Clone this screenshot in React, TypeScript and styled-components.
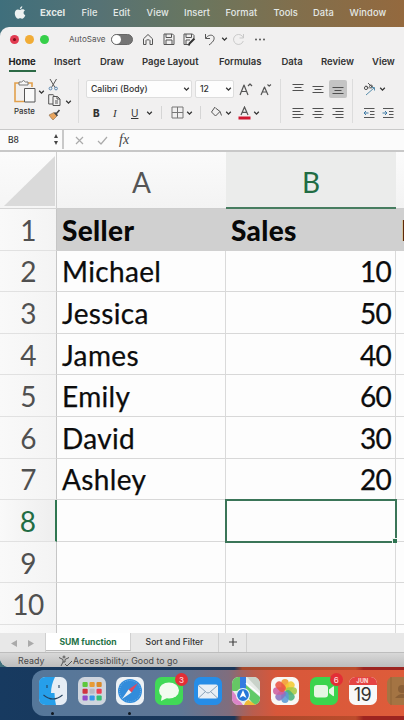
import React from "react";
import styled, { createGlobalStyle, css } from "styled-components";

const Global = createGlobalStyle`
  *{box-sizing:border-box}
  body{margin:0;width:404px;height:720px;overflow:hidden;font-family:Inter,"Liberation Sans",sans-serif;color:#333}
  svg{display:block}
`;

const Desktop = styled.div`
  width:404px;height:720px;overflow:hidden;display:flex;flex-direction:column;
  background:linear-gradient(90deg,#173a60 0,#1a3658 58%,#a5482b 60%,#bc4c2c 88%,#9c2420 90%) 0 667px/404px 53px no-repeat,
    linear-gradient(90deg,#3f6f7c 0,#567274 25%,#69765f 48%,#806f4d 72%,#94693e 100%);
`;
const MenuBar = styled.nav`
  height:27px;flex:none;display:grid;align-items:center;padding:0 0 2px 14px;
  grid-template-columns:26px 41.5px 31.5px 33.5px 37.5px 41.5px 48px 39.5px 36.5px 60px;
  font-size:9.3px;font-weight:500;color:#e4e9e7;overflow:hidden;white-space:nowrap;
`;
const MenuItem = styled.span<{ $bold?: boolean }>`
  font-weight:${p => (p.$bold ? 700 : 500)};letter-spacing:${p => (p.$bold ? "0" : ".1px")};
  font-size:${p => (p.$bold ? "9.6px" : "9.3px")};
`;
const Window = styled.main`
  height:640px;flex:none;display:flex;flex-direction:column;background:#f1f0f0;
  border-radius:9px 0 0 9px;overflow:hidden;
`;
const TitleBar = styled.header`height:24px;flex:none;display:flex;align-items:center;padding-left:10px;`;
const Light = styled.i<{ $c: string }>`
  width:9px;height:9px;border-radius:50%;background:${p => p.$c};margin-right:6px;display:flex;align-items:center;justify-content:center;
`;
const LightDot = styled.i`width:3px;height:3px;border-radius:50%;background:#7d0e18;`;
const AutoSave = styled.span`font-size:8.1px;margin:0 4px 0 14px;width:38px;white-space:nowrap;color:#555;`;
const Toggle = styled.span`width:22px;height:11px;border-radius:6px;background:#747474;border:1px solid #666;margin-right:9px;display:flex;`;
const Knob = styled.i`width:9px;height:9px;border-radius:50%;background:#fff;`;
const QuickIcons = styled.div`display:grid;align-items:center;grid-template-columns:20.5px 20.5px 21px 16.5px 12px 21px 14px;`;

const Tabs = styled.nav`
  height:24px;flex:none;display:grid;padding:3px 0 0 8.5px;white-space:nowrap;
  grid-template-columns:45.5px 46px 42px 77px 62.5px 39.5px 51px 36px;
  font-size:9.5px;font-weight:600;color:#333;
`;
const Tab = styled.span<{ $on?: boolean }>`
  justify-self:start;height:18px;line-height:16px;
  ${p => p.$on && css`font-weight:700;color:#222;border-bottom:2px solid #2d6a46;`}
`;
const Ribbon = styled.section`
  height:55px;flex:none;display:grid;grid-template-columns:79px 202px 72px 51px;border-bottom:1px solid #c9c9c9;padding-top:4px;
`;
const Group = styled.div`height:44px;border-right:1px solid #dcdcdc;`;
const Clipboard = styled(Group)`display:grid;grid-template-columns:24px 11px 13px 12px;padding-left:12px;`;
const PasteBox = styled.div`display:flex;flex-direction:column;align-items:center;gap:3px;font-size:7.8px;font-weight:500;color:#333;white-space:nowrap;padding:1px 0 0 1px;`;
const Drop = styled.div`padding-top:10px;display:flex;justify-content:center;`;
const Tools = styled.div`display:flex;flex-direction:column;gap:3px;padding-left:1px;`;
const ToolDrop = styled.div`padding:20px 0 0 5px;`;
const FontGroup = styled(Group)`padding:1px 0 0 7px;display:flex;flex-direction:column;`;
const Line = styled.div`display:flex;align-items:center;`;
const Select = styled.div<{ $w: number }>`
  width:${p => p.$w}px;height:18px;background:#fdfdfd;border:1px solid #ddd;border-radius:2px;margin-right:3px;
  display:flex;align-items:center;justify-content:space-between;padding:0 1px 0 4px;font-size:8.7px;font-weight:500;white-space:nowrap;
`;
const Format = styled.div`height:19px;margin-top:5px;display:grid;align-items:center;grid-template-columns:20px 18px 15px 15px 10px 15px 14px 10px 15px 13px 15px 11px;padding-left:7px;`;
const Letter = styled.span<{ $k: string }>`
  font-size:${p => (p.$k === "I" ? "11px" : "10px")};font-weight:${p => (p.$k === "B" ? 800 : 400)};
  font-family:${p => (p.$k === "I" ? '"Liberation Serif",serif' : 'Inter,sans-serif')};
  font-style:${p => (p.$k === "I" ? "italic" : "normal")};
  text-decoration:${p => (p.$k === "U" ? "underline" : "none")};
`;
const Sep = styled.i`width:1px;height:13px;background:#d5d5d5;`;
const AlignGroup = styled(Group)`display:grid;grid-template:20px 20px / 20px 20px 20px;row-gap:4px;padding:0 0 0 7px;align-items:center;justify-items:center;`;
const AlignCell = styled.span<{ $on?: boolean }>`
  width:18px;height:18px;border-radius:2px;display:flex;align-items:center;justify-content:center;
  background:${p => (p.$on ? "#c4c4c4" : "transparent")};
`;
const LastGroup = styled.div`display:grid;height:44px;grid-template:20px 20px / 20px 18px;row-gap:4px;padding-left:6px;align-items:center;justify-items:center;`;
const EndDrop = styled.div`justify-self:start;`;

const FormulaBar = styled.section`height:20px;flex:none;display:flex;background:#fbfbfb;`;
const NameBox = styled.div`width:64px;height:19px;border-right:2px solid #c9c9c9;display:flex;justify-content:space-between;align-items:center;padding:0 3px 0 8px;font-size:8.5px;font-weight:500;`;
const FormulaTools = styled.div`display:grid;grid-template-columns:22px 22px 20px;align-items:center;padding-left:11px;`;
const Fx = styled.span`font:italic 14px "Liberation Serif",serif;color:#444;line-height:16px;`;

const Sheet = styled.section`
  height:483px;flex:none;border-top:2px solid #c8c8c8;background:#fdfdfd;overflow:hidden;display:grid;
  grid-template-columns:57px 169px 170px 10px;grid-template-rows:57px 41.6px;grid-auto-rows:41.6px;
  font-family:Lato,sans-serif;font-size:28px;color:#0c0c0c;
`;
const Corner = styled.div`border-right:1px solid #cfcfcf;border-bottom:1px solid #d5d5d5;background:linear-gradient(#fbfbfb,#f5f5f5);padding:4px 1px 0 4px;`;
const ColHead = styled.div<{ $on?: boolean }>`
  display:flex;align-items:center;justify-content:center;padding-top:4px;color:${p => (p.$on ? "#216c43" : "#555")};
  background:${p => (p.$on ? "#ebeceb" : "linear-gradient(#fbfbfb,#f3f3f3)")};
  border-bottom:${p => (p.$on ? "2px solid #477d60" : "1px solid #cecece")};
`;
const RowHead = styled.div<{ $on?: boolean }>`
  display:flex;align-items:center;justify-content:center;border-bottom:1px solid #e1e1e1;letter-spacing:-.5px;
  padding-top:1px;
  border-right:${p => (p.$on ? "2px solid #2e7650" : "1px solid #c6c6c6")};
  color:${p => (p.$on ? "#216c43" : "#505050")};background:linear-gradient(90deg,#f9f9f9,${p => (p.$on ? "#eeeeee" : "#f4f4f4")});
`;
const Cell = styled.div<{ $head?: boolean; $num?: boolean; $on?: boolean }>`
  display:flex;align-items:center;justify-content:${p => (p.$num ? "flex-end" : "flex-start")};
  padding:${p => (p.$num ? "1px 4px 0 0" : "1px 0 0 5px")};overflow:hidden;
  letter-spacing:${p => (p.$num ? "-.7px" : ".35px")};-webkit-text-stroke:.25px currentColor;
  border-right:1px solid #dadada;border-bottom:1px solid #d8d8d8;
  ${p => p.$head && css`background:#d0d0d0;border-color:#d0d0d0;font-weight:900;color:#080808;-webkit-text-stroke:0;`}
  ${p => p.$on && css`overflow:visible;position:relative;outline:2px solid #3b7558;outline-offset:-1px;z-index:1;`}
`;
const FillHandle = styled.i`position:absolute;right:-2px;bottom:-2px;width:5px;height:5px;background:#2c7350;border:1px solid #eef5f0;border-width:1px 0 0 1px;`;
const SheetTabs = styled.footer`height:19px;flex:none;background:#e8e8e8;display:grid;grid-template-columns:46px 85px 88px 28px;font-size:8.6px;font-weight:500;white-space:nowrap;`;
const Arrows = styled.div`display:flex;align-items:center;gap:11px;padding:1px 0 0 11px;border-right:1px solid #d0d0d0;`;
const SheetTab = styled.div<{ $on?: boolean }>`
  display:flex;justify-content:center;align-items:center;border-right:1px solid #d0d0d0;padding-bottom:1px;
  ${p => p.$on && css`background:#fff;color:#257348;font-weight:700;border-bottom:1px solid #b9b9b9;height:18px;padding:0;`}
`;
const Status = styled.footer`
  height:16px;flex:none;border-top:1px solid #bdbdbd;background:linear-gradient(#d8d8d8,#bdbdbd);display:flex;align-items:center;
  font-size:8.8px;color:#484848;padding-left:18px;white-space:nowrap;border-bottom:1px solid #aaa;
`;
const Ready = styled.span`width:40.5px;letter-spacing:.1px;`;
const Access = styled.span`letter-spacing:.05px;margin-left:.5px;`;

const Dock = styled.footer`
  margin:3px 0 0 32px;width:394px;height:46px;flex:none;border-radius:12px;padding:7px 7px 0;
  background:linear-gradient(90deg,#55779a 0,#607796 38%,#806d7d 50%,#b95d4e 56%,#d8573a 62%,#df5d3a 100%);
  display:grid;grid-template-columns:repeat(10,38.7px);
`;
const DockApp = styled.div`position:relative;width:28px;height:38px;`;
const Running = styled.i`position:absolute;left:12px;top:35px;width:3px;height:3px;border-radius:50%;background:#101820;`;
const Badge = styled.b`position:absolute;right:-5px;top:-4px;width:13px;height:13px;border-radius:50%;background:#e32e36;color:#ffd9d9;font-size:8px;font-weight:500;display:flex;align-items:center;justify-content:center;`;
const CalTile = styled.div`width:28px;height:28px;border-radius:6.5px;background:#f8f8f8;overflow:hidden;text-align:center;color:#333;font-size:18px;line-height:20px;letter-spacing:-.5px;`;
const Month = styled.div`height:8px;background:#e54343;color:#ffe3e0;font-size:5.5px;line-height:9px;font-weight:700;letter-spacing:.2px;`;

const Chevron = () => <svg width="7" height="6" viewBox="0 0 7 6"><path d="M1.2 1.8 3.5 4.1 5.8 1.8" fill="none" stroke="#333" strokeWidth="1.3" /></svg>;
const Stroke = ({ w = 13, h = 13, c = "#555", s = 1, children }: { w?: number; h?: number; c?: string; s?: number; children: React.ReactNode }) => (
  <svg width={w} height={h} viewBox={`0 0 ${w} ${h}`} fill="none" stroke={c} strokeWidth={s} strokeLinejoin="round">{children}</svg>
);
const Bars = ({ d }: { d: string }) => <Stroke w={12} h={12} c="#505050"><path d={d} /></Stroke>;

const rows: [string, string][] = [["Michael", "10"], ["Jessica", "50"], ["James", "40"], ["Emily", "60"], ["David", "30"], ["Ashley", "20"], ["", ""], ["", ""], ["", ""], ["", ""]];
const petals = ["#f39a2e", "#f3cc32", "#a7c944", "#4ab27c", "#5a9bd6", "#8b72c0", "#ce5e9f", "#ea5443"];
const tiles = ["#5ec83d", "#e89b35", "#d98a2a", "#d03440", "#b9b9c4", "#ec3f55", "#9149c9", "#3498e8", "#33bf74"];

export default function App() {
  return (
    <Desktop>
      <Global />
      <MenuBar>
        <svg width="12" height="14" viewBox="0 0 12 14" fill="#edf1f1"><path d="M8.3.3C8.4 1.7 7.3 3 5.9 3 5.800 1.700 6.900.5 8.300.3ZM6 3.900C6.700 3.900 7.400 3.300 8.500 3.300 9.500 3.300 10.400 3.800 10.900 4.600 9 5.700 9.300 8.500 11.300 9.300 10.700 11 9.600 12.700 8.400 12.700 7.500 12.700 7.200 12.200 6.200 12.200 5.200 12.200 4.800 12.700 4 12.700 2.400 12.700.8 9.800.8 7.300.8 4.800 2.300 3.400 3.900 3.400 4.800 3.400 5.500 3.900 6 3.900Z" /></svg>
        <MenuItem $bold>Excel</MenuItem>
        {["File", "Edit", "View", "Insert", "Format", "Tools", "Data", "Window"].map(t => <MenuItem key={t}>{t}</MenuItem>)}
      </MenuBar>
      <Window>
        <TitleBar>
          <Light $c="#e23b51"><LightDot /></Light><Light $c="#f1ac36" /><Light $c="#36cf49" />
          <AutoSave>AutoSave</AutoSave>
          <Toggle><Knob /></Toggle>
          <QuickIcons>
            <Stroke><path d="M1.500 5.800 6 1.500 10.500 5.800V11.500H8V7.500Q8 6.800 6 6.800T4 7.500V11.500H1.500Z" /></Stroke>
            <Stroke><path d="M1 1H9.500L11 2.500V11.500H1ZM3 1V4.500H8.500V1M3 11.500V7H9V11.500" /></Stroke>
            <Stroke><path d="M5 11.500H1V1H9.500L11 2.500V5M3 1V4.500H8.500V1M3 11.500V7H7" /><path d="m11.500 5.500-5 5-.8 2" stroke="#333" strokeWidth="2" /></Stroke>
            <Stroke><path d="M1.500 1V5.500H6M1.800 5.200C5 .6 11 1.500 10 6.300 9.500 8.500 7 10.500 5 12" /></Stroke>
            <Chevron />
            <Stroke c="#c9c9c9"><path d="M10.500 1V5H6.500M10.300 8A5 5 0 1 1 9.500 3.400L10.500 5" /></Stroke>
            <svg width="12" height="3" fill="#555"><circle cx="2" cy="1.500" r="1" /><circle cx="6" cy="1.500" r="1" /><circle cx="10" cy="1.500" r="1" /></svg>
          </QuickIcons>
        </TitleBar>
        <Tabs>
          <Tab $on>Home</Tab>
          {["Insert", "Draw", "Page Layout", "Formulas", "Data", "Review", "View"].map(t => <Tab key={t}>{t}</Tab>)}
        </Tabs>
        <Ribbon>
          <Clipboard>
            <PasteBox>
              <svg width="22" height="23" viewBox="0 0 22 23" fill="none"><path d="M5 3H1V21.500H10M14 3H18V7" stroke="#e2a04c" strokeWidth="1.600" /><path d="M5 5V2H7.500Q9.500-1 11.500 2H14V5Z" fill="#f7f7f7" stroke="#777" /><path d="M10.500 8.500H21V22H10.500Z" fill="#fafafa" stroke="#555" /></svg>
              Paste
            </PasteBox>
            <Drop><Chevron /></Drop>
            <Tools>
              <Stroke w={11} h={12}><path d="m2 0 5 8.500M8.500 0l-5 8.500" /><circle cx="2.500" cy="9.500" r="1.400" stroke="#5a86b0" /><circle cx="8" cy="9.500" r="1.400" stroke="#5a86b0" /></Stroke>
              <Stroke w={13} h={12}><path d="M5 10H.7V.7H5L6.500 2M5 2.500H9.500L12 5V11.500H5ZM9 2.500V5H12M7 7H10M7 9H10" /></Stroke>
              <svg width="13" height="12" viewBox="0 0 13 12"><path d="M1 6 6 3.500 9 7 5 11Q3 9 1 6Z" fill="#e7a45e" stroke="#8b6b4c" strokeWidth=".6" /><path d="m6.500 3.500 3 3.300M8 5l3.500-4" fill="none" stroke="#444" strokeWidth="1.600" /></svg>
            </Tools>
            <ToolDrop><Chevron /></ToolDrop>
          </Clipboard>
          <FontGroup>
            <Line>
              <Select $w={106}>Calibri (Body)<Chevron /></Select>
              <Select $w={39}>12<Chevron /></Select>
              <Stroke w={21} h={15} s={1.2}><path d="m3 13 4-10 4 10M4.500 9.500h5M11 4l2-2 2 2" /></Stroke>
              <Stroke w={16} h={15} s={1.2}><path d="m3 13 3.500-8 3.500 8M4.200 10h4.600M9.500 2.500l1.700 1.700 1.700-1.700" /></Stroke>
            </Line>
            <Format>
              <Letter $k="B">B</Letter><Letter $k="I">I</Letter><Letter $k="U">U</Letter><Chevron /><Sep />
              <Stroke c="#777"><path d="M1 1H12V12H1ZM1 6.500H12M6.500 1V12" /></Stroke><Chevron /><Sep />
              <Stroke><path d="m5 1-3.500 5 4 4L10 5.500 5.500 2M10 5.500l1.500 4" /></Stroke><Chevron />
              <svg width="13" height="14" viewBox="0 0 13 14"><path d="m3 9 3.500-8L10 9M4.200 6.300h4.600" fill="none" stroke="#555" strokeWidth="1.200" /><path d="M.5 10.500H12.500V13.500H.5Z" fill="#cf1730" /></svg>
              <Chevron />
            </Format>
          </FontGroup>
          <AlignGroup>
            <AlignCell><Bars d="M.5 1.500H11.500M2.500 4.500H9.500M.5 7.500H11.500" /></AlignCell>
            <AlignCell><Bars d="M.5 3.500H11.500M2.500 6.500H9.500M.5 9.500H11.500" /></AlignCell>
            <AlignCell $on><Bars d="M.5 4.500H11.500M2.500 7.500H9.500M.5 10.500H11.500" /></AlignCell>
            <AlignCell><Bars d="M.5 1.500H11.500M.5 4.500H8.500M.5 7.500H11.500M.5 10.500H8.500" /></AlignCell>
            <AlignCell><Bars d="M.5 1.500H11.500M2.500 4.500H9.500M.5 7.500H11.500M2.500 10.500H9.500" /></AlignCell>
            <AlignCell><Bars d="M.5 1.500H11.500M3.500 4.500H11.500M.5 7.500H11.500M3.500 10.500H11.500" /></AlignCell>
          </AlignGroup>
          <LastGroup>
            <Stroke><circle cx="3" cy="5" r="1.600" /><path d="m3 2.500 3 3M5 0l4 4" /><circle cx="8" cy="3.500" r="1.500" /><path d="m3 12 8-7M8.500 4.500H11.500V7.500" stroke="#568caa" /></Stroke>
            <EndDrop><Chevron /></EndDrop>
            <Stroke w={12} h={12}><path d="M1 1.500H11.500M7 4.500H11.500M7 7.500H11.500M1 10.500H11.500" /><path d="M5.500 6H1M3 4 1 6l2 2" stroke="#3f7ba5" /></Stroke>
            <Stroke w={12} h={12}><path d="M1 1.500H11.500M7 4.500H11.500M7 7.500H11.500M1 10.500H11.500" /><path d="M.5 6H5M3 4l2 2-2 2" stroke="#3f7ba5" /></Stroke>
          </LastGroup>
        </Ribbon>
        <FormulaBar>
          <NameBox>B8<svg width="6" height="13" viewBox="0 0 6 13" fill="#444"><path d="m3 1 2 4H1ZM1 8h4l-2 4Z" /></svg></NameBox>
          <FormulaTools>
            <Stroke w={9} h={9} c="#aaa" s={1.2}><path d="m1 1 7 7M8 1 1 8" /></Stroke>
            <Stroke w={11} h={9} c="#aaa" s={1.2}><path d="m1 5 3 3 6-7" /></Stroke>
            <Fx>fx</Fx>
          </FormulaTools>
        </FormulaBar>
        <Sheet>
          <Corner><svg width="51" height="50" viewBox="0 0 51 50"><path d="M51 0V50H0Z" fill="#dadada" /></svg></Corner>
          <ColHead>A</ColHead><ColHead $on>B</ColHead><ColHead />
          <RowHead>1</RowHead><Cell $head>Seller</Cell><Cell $head>Sales</Cell><Cell $head>R</Cell>
          {rows.map(([n, v], i) => (
            <React.Fragment key={i}>
              <RowHead $on={i === 6}>{i < 9 ? i + 2 : ""}</RowHead>
              <Cell>{n}</Cell><Cell $num $on={i === 6}>{v}{i === 6 && <FillHandle />}</Cell><Cell />
            </React.Fragment>
          ))}
        </Sheet>
        <SheetTabs>
          <Arrows><svg width="6" height="7" fill="#aaa"><path d="M6 0V7L0 3.500Z" /></svg><svg width="6" height="7" fill="#aaa"><path d="M0 0V7L6 3.500Z" /></svg></Arrows>
          <SheetTab $on>SUM function</SheetTab><SheetTab>Sort and Filter</SheetTab>
          <SheetTab><Stroke w={8} h={8} c="#444" s={1.2}><path d="M4 0V8M0 4H8" /></Stroke></SheetTab>
        </SheetTabs>
        <Status>
          <Ready>Ready</Ready>
          <Stroke w={14} h={11} c="#555"><circle cx="5" cy="2" r="1" /><path d="M0 2.500 4 4.500V7l-2 4M10 2.500 6 4.500V7M4 7h2M6 9l2 2 5-5" /></Stroke>
          <Access>Accessibility: Good to go</Access>
        </Status>
      </Window>
      <Dock>
        <DockApp>
          <svg width="28" height="28" viewBox="0 0 28 28"><rect width="28" height="28" rx="6.500" fill="#e6edf5" /><path d="M6.500 0H16Q12 8 12 16H15.500Q15.500 22 17 28H6.500Q0 28 0 21.500V6.500Q0 0 6.500 0Z" fill="#269fea" /><path d="M8 8v3M20 8v3M4.500 18Q14 26 23.500 18" fill="none" stroke="#24425f" strokeWidth="1.100" /></svg><Running />
        </DockApp>
        <DockApp>
          <svg width="28" height="28" viewBox="0 0 28 28"><rect width="28" height="28" rx="6.500" fill="#cfd5de" />{tiles.map((c, i) => <rect key={i} x={4.5 + (i % 3) * 7} y={5 + Math.floor(i / 3) * 6.7} width="5.200" height="5" rx="1" fill={c} />)}</svg>
        </DockApp>
        <DockApp>
          <svg width="28" height="28" viewBox="0 0 28 28"><rect width="28" height="28" rx="6.500" fill="#edf1f5" /><circle cx="14" cy="14" r="12" fill="#328cdb" /><circle cx="14" cy="14" r="10.500" fill="none" stroke="#9bcbf0" strokeDasharray=".5 1.500" /><path d="M22 6 12.500 12.500 15.500 15.500Z" fill="#e3475d" /><path d="M6 22 12.500 12.500 15.500 15.500Z" fill="#eef2f5" /></svg><Running />
        </DockApp>
        <DockApp>
          <svg width="28" height="28" viewBox="0 0 28 28"><rect width="28" height="28" rx="6.500" fill="#41d957" /><ellipse cx="14" cy="13.500" rx="10" ry="8" fill="#f1fbef" /><path d="m7 18-1 6 6-3Z" fill="#f1fbef" /></svg><Badge>3</Badge>
        </DockApp>
        <DockApp>
          <svg width="28" height="28" viewBox="0 0 28 28"><rect width="28" height="28" rx="6.500" fill="#268de7" /><rect x="4" y="7.500" width="20" height="14" rx="2" fill="#e8eff5" /><path d="m4.500 8.500 8 7q1.500 1 3 0l8-7M4.500 21l7-6.500M23.500 21l-7-6.500" stroke="#8ba3b9" fill="none" /></svg>
        </DockApp>
        <DockApp>
          <svg width="28" height="28" viewBox="0 0 28 28"><defs><clipPath id="map"><rect width="28" height="28" rx="6.500" /></clipPath></defs><g clipPath="url(#map)"><rect width="28" height="28" fill="#e8ece8" /><path d="M0 0H8V14H0Z" fill="#66c765" /><path d="M0 13 11 28H0Z" fill="#dc84c8" /><path d="M14 8 28 20V28H22L14 18Z" fill="#62ca68" /><path d="M15 0H28V14Z" fill="#c9d2c9" /><path d="M15 22 24 28H12Z" fill="#f1bb37" /><path d="M8 0h6V20H8Z" fill="#347bdf" /><path d="m14 6 14 12" stroke="#fff" strokeWidth="1.500" /></g><circle cx="11" cy="18" r="6.500" fill="#2677d9" stroke="#edf3f5" strokeWidth="1.200" /><path d="m11 13 3.500 8-3.500-2-3.500 2Z" fill="#fff" /></svg>
        </DockApp>
        <DockApp>
          <svg width="28" height="28" viewBox="0 0 28 28"><rect width="28" height="28" rx="6.500" fill="#f8f7f4" />{petals.map((c, i) => <rect key={c} x="10.300" y="2" width="7.400" height="11.500" rx="3.700" fill={c} fillOpacity=".88" transform={`rotate(${i * 45} 14 14)`} />)}</svg>
        </DockApp>
        <DockApp>
          <svg width="28" height="28" viewBox="0 0 28 28"><rect width="28" height="28" rx="6.500" fill="#3bd44d" /><rect x="4" y="8" width="14" height="12.500" rx="3" fill="#e5f6e4" /><path d="m19 12.500 4-3q1-.5 1 .5v8.500q0 1-1 .5l-4-3Z" fill="#e5f6e4" /></svg><Badge>6</Badge>
        </DockApp>
        <DockApp><CalTile><Month>JUN</Month>19</CalTile></DockApp>
        <DockApp><svg width="28" height="28" viewBox="0 0 28 28"><rect width="28" height="28" rx="6" fill="#a47443" /><path d="M4 0V28" stroke="#8f6439" /><circle cx="15" cy="12" r="4" fill="#8a5f36" /><path d="M8 21q7-8 14 0Z" fill="#8a5f36" /></svg></DockApp>
      </Dock>
    </Desktop>
  );
}
